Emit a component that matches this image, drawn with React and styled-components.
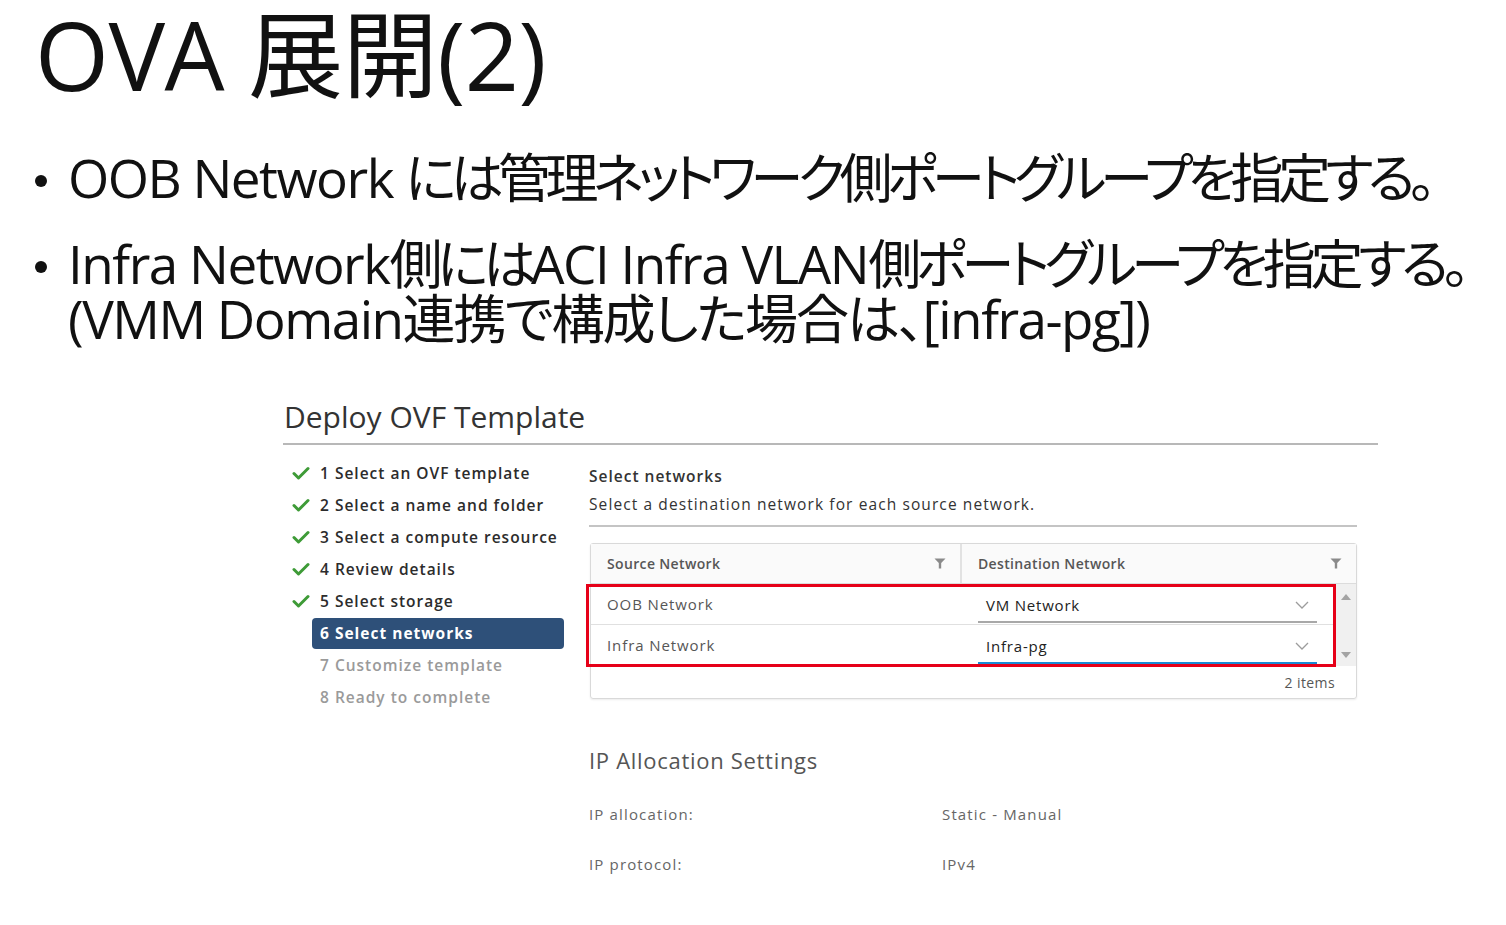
import React from "react";
import styled, { createGlobalStyle } from "styled-components";

const Global = createGlobalStyle`
  html, body { margin: 0; padding: 0; background: #fff; }
  body { width: 1506px; height: 925px; overflow: hidden; }
`;

const Page = styled.div`
  width: 1506px;
  height: 925px;
  background: #fff;
  display: flex;
  flex-direction: column;
  font-family: "Open Sans", "Noto Sans CJK JP", sans-serif;
`;

const Title = styled.h1`
  margin: 6px 0 0 35px;
  font-size: 95px;
  line-height: 96px;
  height: 96px;
  font-weight: 400;
  color: #111;
  letter-spacing: -0.5px;
  font-feature-settings: "palt";
  white-space: nowrap;
`;

const Bullets = styled.ul`
  list-style: none;
  margin: 48px 0 0 0;
  padding: 0;
  display: flex;
  flex-direction: column;
  gap: 31px;
`;

const Bullet = styled.li`
  display: flex;
  align-items: flex-start;
  font-size: 53px;
  line-height: 55px;
  color: #111;
  letter-spacing: -1.5px;
  font-feature-settings: "palt";
`;

const Ja = styled.span`
  letter-spacing: ${(p) => p.$ls}px;
`;

const Marker = styled.span`
  flex: none;
  width: 68px;
  display: flex;
  padding-left: 35px;
  box-sizing: border-box;
  &::before {
    content: "";
    margin-top: 25px;
    width: 12px;
    height: 12px;
    border-radius: 50%;
    background: #111;
  }
`;

const BulletText = styled.span`
  white-space: nowrap;
  display: flex;
  flex-direction: column;
`;

const Dialog = styled.section`
  margin: 51px 0 0 283px;
  width: 1095px;
  font-family: "Open Sans", sans-serif;
`;

const DialogTitle = styled.h2`
  margin: 0;
  font-size: 30px;
  line-height: 40px;
  font-weight: 400;
  color: #333;
  padding-left: 1px;
  border-bottom: 2px solid #b8b8b8;
  padding-bottom: 6px;
`;

const DialogBody = styled.div`
  display: flex;
  margin-top: 12px;
`;

const Nav = styled.ol`
  list-style: none;
  margin: 0;
  padding: 0 0 0 9px;
  width: 297px;
  flex: none;
  display: flex;
  flex-direction: column;
`;

const NavItem = styled.li`
  display: flex;
  align-items: center;
  height: 32px;
`;

const CheckCell = styled.span`
  width: 20px;
  flex: none;
  display: flex;
  align-items: center;
`;

const NavLabel = styled.span`
  width: 252px;
  height: 31px;
  box-sizing: border-box;
  padding-left: 8px;
  display: flex;
  align-items: center;
  border-radius: 4px;
  font-size: 15.5px;
  letter-spacing: 1px;
  white-space: nowrap;
  color: ${(p) => (p.$state === "active" ? "#fff" : p.$state === "todo" ? "#9a9a9a" : "#2c2c2c")};
  background: ${(p) => (p.$state === "active" ? "#2e5079" : "transparent")};
  font-weight: ${(p) => (p.$state === "active" ? 700 : 600)};
`;

const Content = styled.div`
  flex: 1;
  padding-right: 21px;
  display: flex;
  flex-direction: column;
`;

const SectionHead = styled.div`
  border-bottom: 2px solid #c4c4c4;
  padding-bottom: 10px;
`;

const StepTitle = styled.div`
  font-size: 15.5px;
  font-weight: 600;
  letter-spacing: 1px;
  color: #333;
  line-height: 22px;
  margin-top: 8px;
`;

const StepDesc = styled.div`
  font-size: 15.5px;
  letter-spacing: 1.1px;
  color: #333;
  line-height: 22px;
  margin-top: 6px;
`;

const Grid = styled.div`
  position: relative;
  margin: 16px 0 0 1px;
  width: 767px;
  border: 1px solid #d9d9d9;
  border-radius: 3px;
  box-shadow: 0 1px 2px rgba(0, 0, 0, 0.08);
  box-sizing: border-box;
`;

const HeaderRow = styled.div`
  display: grid;
  grid-template-columns: 369px 1fr;
  height: 39px;
  background: #fafafa;
  border-bottom: 1px solid #dcdcdc;
`;

const HeadCell = styled.div`
  display: flex;
  align-items: center;
  justify-content: space-between;
  padding: 0 14px 0 16px;
  font-size: 14px;
  font-weight: 600;
  letter-spacing: 0.35px;
  color: #565656;
  border-left: ${(p) => (p.$divider ? "2px solid #e2e2e2" : "none")};
`;

const BodyWrap = styled.div`
  display: flex;
`;

const Rows = styled.div`
  flex: 1;
  display: flex;
  flex-direction: column;
`;

const Row = styled.div`
  display: grid;
  grid-template-columns: 370px 1fr;
  height: ${(p) => p.$h}px;
  border-bottom: 1px solid #e0e0e0;
  box-sizing: border-box;
`;

const Cell = styled.div`
  display: flex;
  align-items: center;
  padding-left: 16px;
  font-size: 15px;
  letter-spacing: 0.9px;
  color: #565656;
`;

const Select = styled.div`
  width: 339px;
  height: 38px;
  box-sizing: border-box;
  display: flex;
  align-items: center;
  justify-content: space-between;
  padding: 4px 8px 0 8px;
  margin-left: 1px;
  font-size: 15px;
  letter-spacing: 0.8px;
  color: #222;
  border-bottom: 2px solid ${(p) => (p.$focus ? "#1a8ad4" : "#a8a8a8")};
`;

const Scrollbar = styled.div`
  width: 20px;
  flex: none;
  background: #f0f0f0;
  display: flex;
  flex-direction: column;
  justify-content: space-between;
  align-items: center;
  padding: 10px 0 8px;
  box-sizing: border-box;
`;

const Footer = styled.div`
  height: 32px;
  display: flex;
  align-items: center;
  justify-content: flex-end;
  padding-right: 21px;
  font-size: 14px;
  letter-spacing: 0.4px;
  color: #565656;
`;

const Highlight = styled.div`
  position: absolute;
  left: -5px;
  top: 40px;
  width: 750px;
  height: 83px;
  border: 3px solid #e60018;
  box-sizing: border-box;
  pointer-events: none;
`;

const SubHeading = styled.h3`
  margin: 47px 0 0 0;
  font-size: 22px;
  letter-spacing: 0.7px;
  line-height: 28px;
  font-weight: 400;
  color: #555;
`;

const PropList = styled.dl`
  margin: 29px 0 0 0;
  display: grid;
  grid-template-columns: 353px 1fr;
  row-gap: 28px;
  font-size: 15px;
  letter-spacing: 1.15px;
  line-height: 22px;
  color: #666;
  dt, dd { margin: 0; }
`;

const Check = () => (
  <svg width="18" height="14" viewBox="0 0 18 14">
    <polyline points="2,7.5 6.5,12 16,2.5" fill="none" stroke="#3e9b37" strokeWidth="3" strokeLinecap="round" strokeLinejoin="round" />
  </svg>
);

const Filter = () => (
  <svg width="12" height="11" viewBox="0 0 12 11">
    <path d="M0.5 0.5 H11.5 L7.2 5 V10.5 H4.8 V5 Z" fill="#8a8a8a" />
  </svg>
);

const Chevron = () => (
  <svg width="14" height="8" viewBox="0 0 14 8">
    <polyline points="1,1 7,7 13,1" fill="none" stroke="#9c9c9c" strokeWidth="1.3" />
  </svg>
);

const Tri = ({ up }) => (
  <svg width="10" height="6" viewBox="0 0 10 6">
    <path d={up ? "M0 6 L5 0 L10 6 Z" : "M0 0 L10 0 L5 6 Z"} fill="#a3a3a3" />
  </svg>
);

const steps = [
  ["1 Select an OVF template", "done"],
  ["2 Select a name and folder", "done"],
  ["3 Select a compute resource", "done"],
  ["4 Review details", "done"],
  ["5 Select storage", "done"],
  ["6 Select networks", "active"],
  ["7 Customize template", "todo"],
  ["8 Ready to complete", "todo"],
];

export default function App() {
  return (
    <Page>
      <Global />
      <Title>OVA 展開(2)</Title>
      <Bullets>
        <Bullet>
          <Marker />
          <BulletText>
            <span>
              OOB Network <Ja $ls={-5.6}>には管理ネットワーク側ポートグループを指定する。</Ja>
            </span>
          </BulletText>
        </Bullet>
        <Bullet>
          <Marker />
          <BulletText>
            <span>
              Infra Network<Ja $ls={-5.2}>側には</Ja>ACI Infra VLAN<Ja $ls={-5.2}>側ポートグループを指定する。</Ja>
            </span>
            <span>
              (VMM Domain<Ja $ls={-2}>連携で構成した場合は、</Ja>[infra-pg])
            </span>
          </BulletText>
        </Bullet>
      </Bullets>
      <Dialog>
        <DialogTitle>Deploy OVF Template</DialogTitle>
        <DialogBody>
          <Nav>
            {steps.map(([label, state]) => (
              <NavItem key={label}>
                <CheckCell>{state === "done" && <Check />}</CheckCell>
                <NavLabel $state={state}>{label}</NavLabel>
              </NavItem>
            ))}
          </Nav>
          <Content>
            <SectionHead>
              <StepTitle>Select networks</StepTitle>
              <StepDesc>Select a destination network for each source network.</StepDesc>
            </SectionHead>
            <Grid>
              <HeaderRow>
                <HeadCell>
                  Source Network <Filter />
                </HeadCell>
                <HeadCell $divider>
                  Destination Network <Filter />
                </HeadCell>
              </HeaderRow>
              <BodyWrap>
                <Rows>
                  <Row $h={41}>
                    <Cell>OOB Network</Cell>
                    <Cell>
                      <Select>
                        VM Network <Chevron />
                      </Select>
                    </Cell>
                  </Row>
                  <Row $h={41}>
                    <Cell>Infra Network</Cell>
                    <Cell>
                      <Select $focus>
                        Infra-pg <Chevron />
                      </Select>
                    </Cell>
                  </Row>
                </Rows>
                <Scrollbar>
                  <Tri up />
                  <Tri />
                </Scrollbar>
              </BodyWrap>
              <Footer>2 items</Footer>
              <Highlight />
            </Grid>
            <SubHeading>IP Allocation Settings</SubHeading>
            <PropList>
              <dt>IP allocation:</dt>
              <dd>Static - Manual</dd>
              <dt>IP protocol:</dt>
              <dd>IPv4</dd>
            </PropList>
          </Content>
        </DialogBody>
      </Dialog>
    </Page>
  );
}
